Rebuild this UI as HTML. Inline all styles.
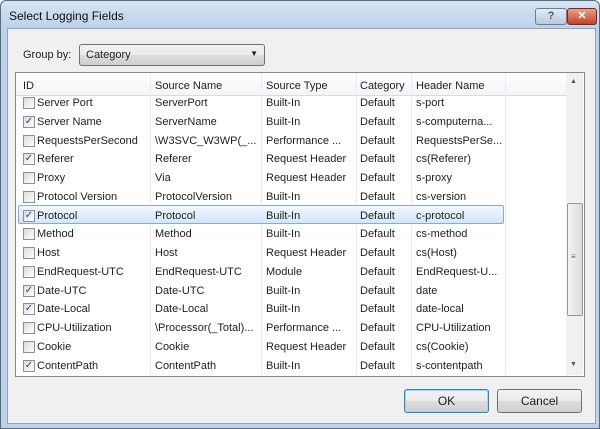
<!DOCTYPE html><html><head><style>
body{margin:0;width:600px;height:429px;overflow:hidden;font-family:"Liberation Sans",sans-serif;font-size:11px;color:#1e1e1e;background:#fff}
.win{position:absolute;left:0;top:0;width:598px;height:427px;border:1px solid #5a6c80;border-radius:6px 6px 0 0;background:linear-gradient(#d7e4f2,#bcd2ea 28px,#bcd2ea);}
.client{position:absolute;left:6px;top:27px;width:587px;height:394px;background:#f0f0f0;border:1px solid #8ea3ba}
.title{position:absolute;left:8px;top:8px;font-size:12px;color:#111}
.hb{position:absolute;top:7px;height:15px;border:1px solid #6c7d90;border-radius:3px;font-size:11px;text-align:center;line-height:15px;font-weight:bold}
.a{position:absolute;white-space:nowrap}
.cb{position:absolute;left:23px;width:10px;height:10px;border:1px solid #8f8f8f;background:linear-gradient(135deg,#dcdcdc,#fff);font-size:10px;line-height:10px;color:#2b3f9c;text-align:center}
.btn{position:absolute;top:389px;height:22px;border:1px solid #707070;border-radius:3px;background:linear-gradient(#f2f2f2,#ebebeb 50%,#dddddd 51%,#cfcfcf);text-align:center;line-height:22px;font-size:12px}
</style></head><body>
<div class="win">
<div class="title">Select Logging Fields</div>
<div class="hb" style="left:534px;width:30px;background:linear-gradient(#e3ecf6,#b7c9de);color:#4a5c70">?</div>
<div class="hb" style="left:566px;width:28px;background:linear-gradient(#e7a08d,#c4412a);color:#fff;border-color:#7a2a1c">✕</div>
<div class="client"></div>
</div>
<div class="a" style="left:23px;top:49px">Group by:</div>
<div class="a" style="left:79px;top:44px;width:184px;height:20px;border:1px solid #707070;border-radius:3px;background:linear-gradient(#f2f2f2,#ebebeb 50%,#dddddd 51%,#cfcfcf)"><span style="position:absolute;left:6px;top:4px">Category</span><span style="position:absolute;right:6px;top:4px;font-size:8px">▼</span></div>
<div class="a" style="left:15px;top:72px;width:568px;height:303px;border:1px solid #828790;background:#fff"></div>
<div class="a" style="left:16px;top:73px;width:550px;height:22px;background:linear-gradient(#fff,#f3f5f8);border-bottom:1px solid #d5dbe3"></div>
<div class="a" style="left:150px;top:73px;width:1px;height:302px;background:#e7edf5"></div>
<div class="a" style="left:261px;top:73px;width:1px;height:302px;background:#e7edf5"></div>
<div class="a" style="left:356px;top:73px;width:1px;height:302px;background:#e7edf5"></div>
<div class="a" style="left:411px;top:73px;width:1px;height:302px;background:#e7edf5"></div>
<div class="a" style="left:505px;top:73px;width:1px;height:302px;background:#e7edf5"></div>
<div class="a" style="left:566px;top:73px;width:17px;height:302px;background:#f0f0f0"></div>
<div class="a" style="left:570px;top:78px;font-size:7px;color:#555">▲</div>
<div class="a" style="left:570px;top:361px;font-size:7px;color:#555">▼</div>
<div class="a" style="left:567px;top:203px;width:14px;height:111px;border:1px solid #979797;border-radius:2px;background:linear-gradient(90deg,#f3f3f3,#dcdcdc)"></div>
<div class="a" style="left:571px;top:252px;font-size:8px;color:#666">≡</div>
<div class="a" style="left:23px;top:80px">ID</div><div class="a" style="left:155px;top:80px">Source Name</div><div class="a" style="left:266px;top:80px">Source Type</div><div class="a" style="left:360px;top:80px">Category</div><div class="a" style="left:416px;top:80px">Header Name</div>
<div class="a" style="left:18px;top:205px;width:484px;height:17px;border:1px solid #84acdd;border-radius:2px;background:linear-gradient(#f1f6fd,#d5e6fa)"></div>
<div id="rows"></div>
<script>
var r=[[0,"Server Port","ServerPort","Built-In","s-port"],[1,"Server Name","ServerName","Built-In","s-computerna..."],[0,"RequestsPerSecond","\\W3SVC_W3WP(_...","Performance ...","RequestsPerSe..."],[1,"Referer","Referer","Request Header","cs(Referer)"],[0,"Proxy","Via","Request Header","s-proxy"],[0,"Protocol Version","ProtocolVersion","Built-In","cs-version"],[1,"Protocol","Protocol","Built-In","c-protocol"],[0,"Method","Method","Built-In","cs-method"],[0,"Host","Host","Request Header","cs(Host)"],[0,"EndRequest-UTC","EndRequest-UTC","Module","EndRequest-U..."],[1,"Date-UTC","Date-UTC","Built-In","date"],[1,"Date-Local","Date-Local","Built-In","date-local"],[0,"CPU-Utilization","\\Processor(_Total)...","Performance ...","CPU-Utilization"],[0,"Cookie","Cookie","Request Header","cs(Cookie)"],[1,"ContentPath","ContentPath","Built-In","s-contentpath"]];
var h="";r.forEach(function(x,i){var y=96+i*18.75;var t=y+1;
h+='<div class="cb" style="top:'+(y+1)+'px">'+(x[0]?'✓':'')+'</div><div class="a" style="left:37px;top:'+t+'px">'+x[1]+'</div><div class="a" style="left:155px;top:'+t+'px">'+x[2]+'</div><div class="a" style="left:266px;top:'+t+'px">'+x[3]+'</div><div class="a" style="left:360px;top:'+t+'px">Default</div><div class="a" style="left:416px;top:'+t+'px">'+x[4]+'</div>';});
document.getElementById("rows").innerHTML=h;
</script>
<div class="btn" style="left:404px;width:83px;border-color:#3c7fb1;box-shadow:inset 0 0 0 1px #9fd6f5">OK</div>
<div class="btn" style="left:497px;width:83px">Cancel</div>
</body></html>
